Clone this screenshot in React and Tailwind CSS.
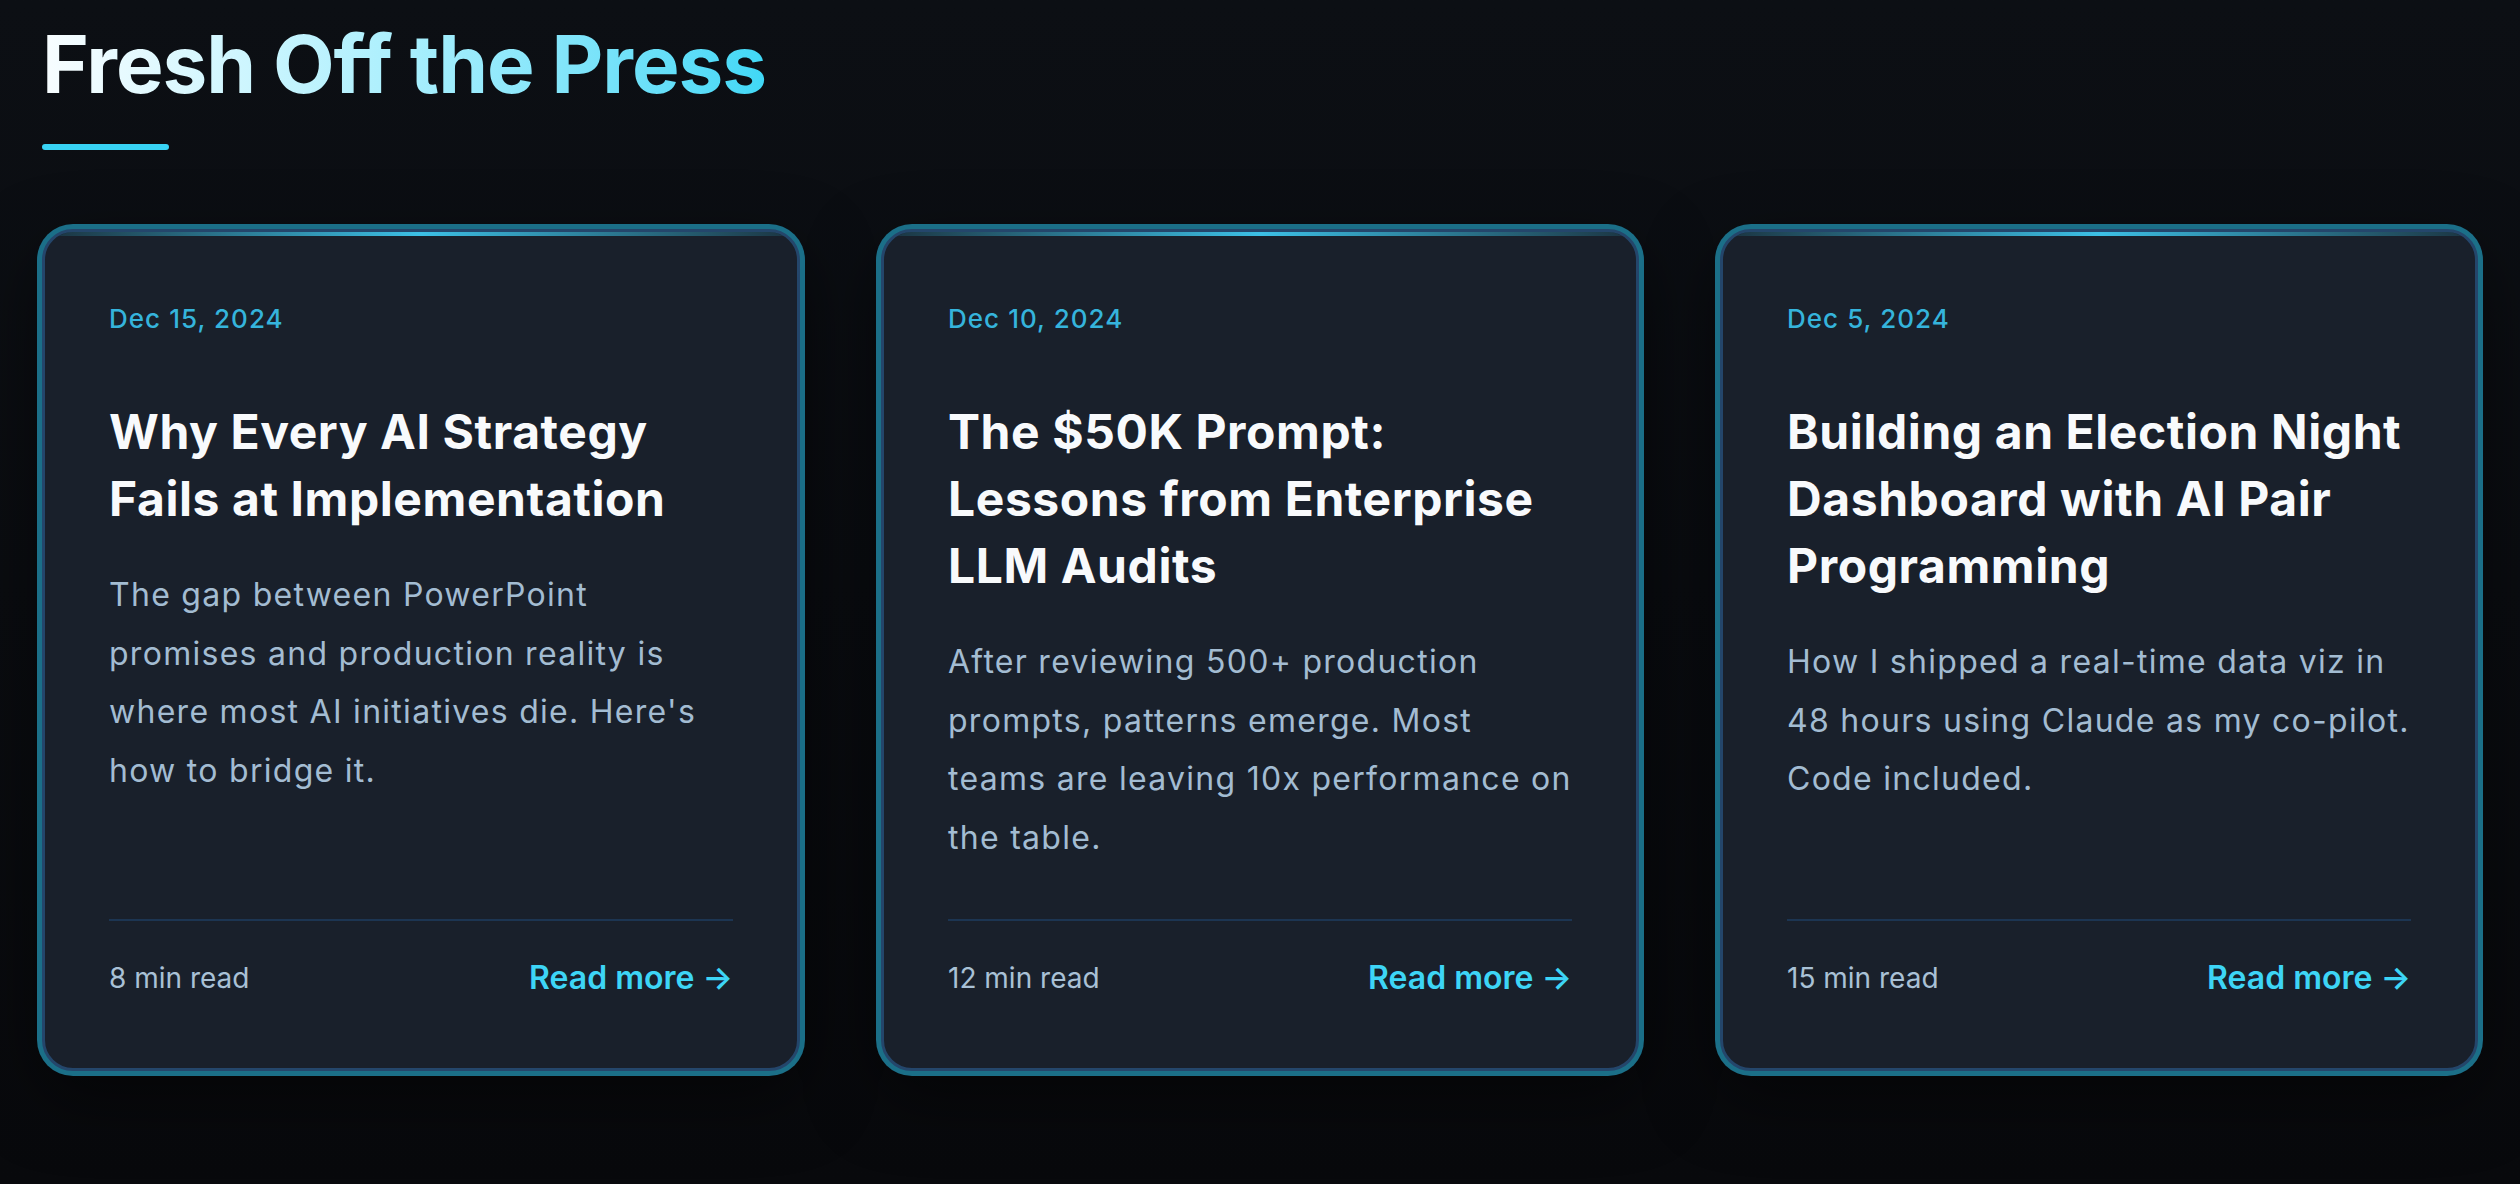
// Blog teaser section: "Fresh Off the Press"
const posts = [
  {
    date: 'Dec 15, 2024',
    title: 'Why Every AI Strategy Fails at Implementation',
    excerpt:
      "The gap between PowerPoint promises and production reality is where most AI initiatives die. Here's how to bridge it.",
    read: '8 min read',
  },
  {
    date: 'Dec 10, 2024',
    title: 'The $50K Prompt: Lessons from Enterprise LLM Audits',
    excerpt:
      'After reviewing 500+ production prompts, patterns emerge. Most teams are leaving 10x performance on the table.',
    read: '12 min read',
  },
  {
    date: 'Dec 5, 2024',
    title: 'Building an Election Night Dashboard with AI Pair Programming',
    excerpt:
      'How I shipped a real-time data viz in 48 hours using Claude as my co-pilot. Code included.',
    read: '15 min read',
  },
];

function PostCard({ post }) {
  return (
    <article className="relative flex flex-col overflow-hidden rounded-[31px] border-[3px] border-[#24466b] bg-[#19202b] px-[64px] pt-[68px] ring-[5px] ring-[#1b6f88] shadow-[0_24px_70px_rgba(0,0,0,0.5)]">
      {/* glow line on top */}
      <div className="absolute inset-x-0 top-0 h-[4px] bg-gradient-to-r from-[#22d3ee]/10 via-[#3cc0e6] to-[#22d3ee]/10" />

      <div className="text-[26px] leading-[38px] font-medium tracking-[0.04em] text-[#35b4dc] mb-[60px]">
        {post.date}
      </div>

      <h3 className="text-[48px] leading-[67px] font-bold tracking-[0.012em] text-[#f8fafc] mb-[34px]">
        {post.title}
      </h3>

      <p className="text-[32px] leading-[58.5px] tracking-[0.04em] text-[#a3bcd2] mb-[52px]">
        {post.excerpt}
      </p>

      <div className="mt-auto border-t-2 border-[#1c3552] pt-[33px] pb-[66px] flex items-center justify-between h-[149px]">
        <span className="text-[28px] leading-[48px] text-[#a9c1d6]">{post.read}</span>
        <a href="#" className="text-[32px] leading-[48px] font-semibold text-[#3dd5f6]">
          Read more →
        </a>
      </div>
    </article>
  );
}

export default function App() {
  return (
    <div className="min-h-screen bg-gradient-to-b from-[#0c0f14] to-[#08090c] px-[42px] pt-[20px] pb-[80px] font-['Inter','Noto_Sans',sans-serif]">
      <h2 className="inline-block text-[80px] leading-[88px] font-bold tracking-[-0.013em] bg-gradient-to-r from-[#f8fdff] via-[#a9effd] to-[#3fd8f6] bg-clip-text text-transparent">
        Fresh Off the Press
      </h2>
      <div className="mt-[36px] h-[6px] w-[127px] rounded-full bg-[#38d3f4]" />

      <div className="mt-[79px] grid grid-cols-3 gap-[81px]">
        {posts.map((p) => (
          <PostCard key={p.date} post={p} />
        ))}
      </div>
    </div>
  );
}
